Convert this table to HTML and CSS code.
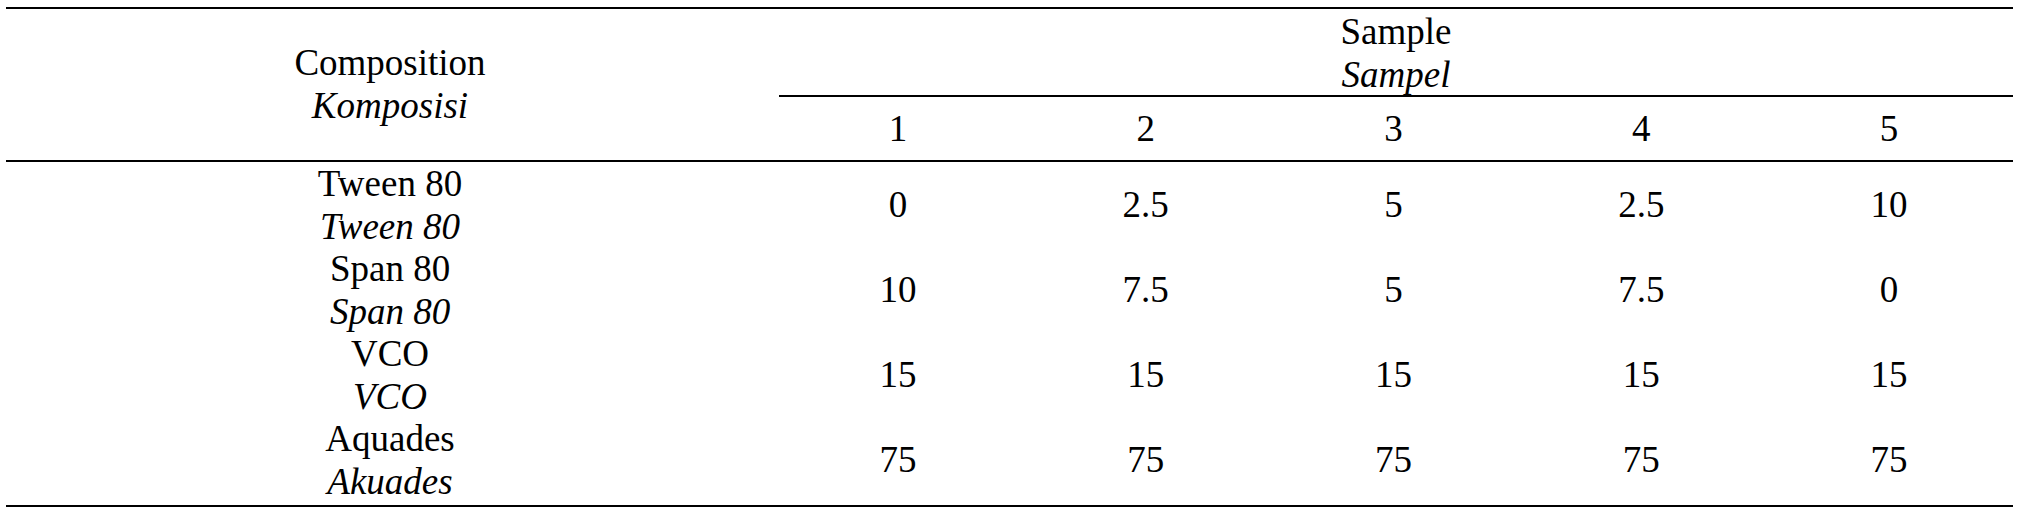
FILE: index.html
```html
<!DOCTYPE html>
<html>
<head>
<meta charset="utf-8">
<link rel="stylesheet" href="styles.css">
</head>
<body>
<div class="table">
  <div class="head">
    <div class="comp"><span>Composition</span><span class="it">Komposisi</span></div>
    <div class="sample"><span>Sample</span><span class="it">Sampel</span></div>
    <div class="num">1</div>
    <div class="num">2</div>
    <div class="num">3</div>
    <div class="num">4</div>
    <div class="num">5</div>
  </div>
  <div class="body">
    <div class="row">
      <div class="name"><span>Tween 80</span><span class="it">Tween 80</span></div>
      <div class="val">0</div><div class="val">2.5</div><div class="val">5</div><div class="val">2.5</div><div class="val">10</div>
    </div>
    <div class="row">
      <div class="name"><span>Span 80</span><span class="it">Span 80</span></div>
      <div class="val">10</div><div class="val">7.5</div><div class="val">5</div><div class="val">7.5</div><div class="val">0</div>
    </div>
    <div class="row">
      <div class="name"><span>VCO</span><span class="it">VCO</span></div>
      <div class="val">15</div><div class="val">15</div><div class="val">15</div><div class="val">15</div><div class="val">15</div>
    </div>
    <div class="row">
      <div class="name"><span>Aquades</span><span class="it">Akuades</span></div>
      <div class="val">75</div><div class="val">75</div><div class="val">75</div><div class="val">75</div><div class="val">75</div>
    </div>
  </div>
</div>
</body>
</html>
```
FILE: styles.css
```css
html, body {
  margin: 0;
  padding: 0;
  background: #fff;
}
body {
  font-family: "Liberation Serif", "Times New Roman", Times, serif;
  font-size: 37px;
  line-height: 42.5px;
  color: #000;
}
.table {
  margin: 7px 0 0 6px;
  width: 2007px;
  border-top: 2px solid #000;
  border-bottom: 2px solid #000;
}
.head {
  display: grid;
  grid-template-columns: 768px repeat(5, 247.8px);
  grid-template-rows: 88px 63px;
  border-bottom: 2px solid #000;
}
.comp {
  grid-row: 1 / 3;
  grid-column: 1;
  display: flex;
  flex-direction: column;
  align-items: center;
  justify-content: center;
}
.sample {
  grid-column: 2 / 7;
  grid-row: 1;
  margin-left: 5px;
  padding-top: 2px;
  display: flex;
  flex-direction: column;
  align-items: center;
  justify-content: flex-start;
  border-bottom: 2px solid #000;
  overflow: visible;
}
.num {
  grid-row: 2;
  display: flex;
  align-items: center;
  justify-content: center;
  padding-top: 1px;
}
.body {
  padding: 1px 0 2px;
}
.row {
  display: grid;
  grid-template-columns: 768px repeat(5, 247.8px);
  height: 85px;
}
.name {
  display: flex;
  flex-direction: column;
  align-items: center;
  justify-content: center;
}
.val {
  display: flex;
  align-items: center;
  justify-content: center;
}
.it {
  font-style: italic;
}
```
